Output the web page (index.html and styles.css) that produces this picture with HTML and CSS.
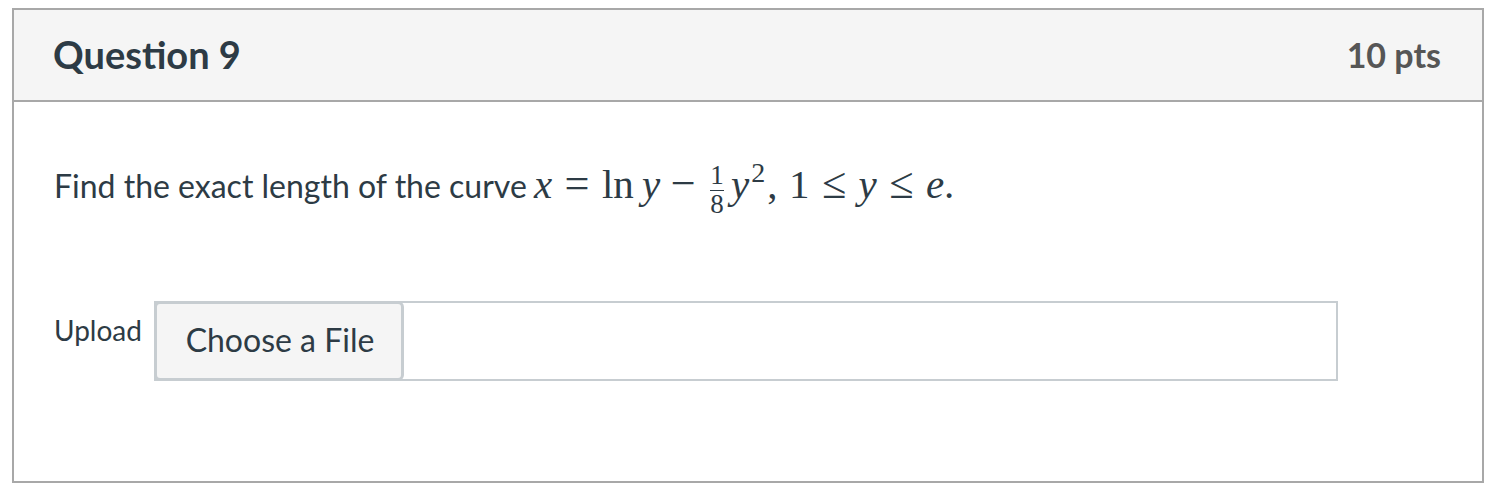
FILE: index.html
```html
<!DOCTYPE html>
<html lang="en">
<head>
<meta charset="utf-8">
<title>Question 9</title>
<link rel="stylesheet" href="styles.css">
</head>
<body>
<div class="card">
  <div class="header">
    <h2 class="title">Question 9</h2>
    <span class="points">10 pts</span>
  </div>
  <div class="content">
    <p class="question">Find the exact length of the curve <span class="math"><i class="mi">x</i><span class="rel">=</span><span class="op">ln</span><i class="mi">y</i><span class="bin">−</span><span class="frac"><span class="num">1</span><span class="bar"></span><span class="den">8</span></span><i class="mi">y</i><span class="sup">2</span><span class="punct">,</span><span class="mn">1</span><span class="rel">≤</span><i class="mi">y</i><span class="rel">≤</span><i class="mi">e</i><span class="mn">.</span></span></p>
    <div class="upload-row">
      <label class="upload-label">Upload</label>
      <div class="file-box">
        <button class="file-btn" type="button">Choose a File</button>
      </div>
    </div>
  </div>
</div>
</body>
</html>
```
FILE: styles.css
```css
html, body {
  margin: 0;
  padding: 0;
  background: #ffffff;
}

body {
  font-family: Lato, "Noto Sans", "Liberation Sans", sans-serif;
  color: #2d3b45;
}

.card {
  box-sizing: border-box;
  width: 1472px;
  height: 475px;
  margin: 8px 0 0 12px;
  border: 2px solid #a8a8a8;
  background: #ffffff;
}

.header {
  box-sizing: border-box;
  height: 92px;
  background: #f5f5f5;
  border-bottom: 2px solid #a8a8a8;
  display: flex;
  align-items: center;
  justify-content: space-between;
  padding: 0 41px 0 39px;
}

.title {
  margin: 0;
  font-size: 38px;
  font-weight: 700;
  line-height: 1.2;
  color: #2d3b45;
}

.points {
  font-size: 34px;
  font-weight: 700;
  line-height: 1.2;
  color: #565656;
}

.content {
  padding: 58px 40px 0 40px;
}

.question {
  margin: 0;
  font-size: 32px;
  line-height: 48px;
}

.math {
  font-family: "Liberation Serif", "DejaVu Serif", serif;
  font-size: 41px;
  color: #2d3b45;
  white-space: nowrap;
  margin-left: -1px;
}

.mi {
  font-style: italic;
}

.rel {
  display: inline-block;
  font-size: 1.08em;
  line-height: 1;
  margin: 0 0.28em;
}

.bin {
  display: inline-block;
  font-size: 1.08em;
  line-height: 1;
  margin: 0 0.3em 0 0.24em;
}

.op {
  margin-right: 0.2em;
}

.punct {
  margin-left: 2px;
  margin-right: 0.28em;
}

.frac {
  display: inline-flex;
  flex-direction: column;
  align-items: center;
  vertical-align: 14px;
  font-size: 27px;
  line-height: 0.92;
  margin: 0 7px 0 1px;
}

.bar {
  display: block;
  width: 14px;
  height: 1px;
  background: #2d3b45;
  margin: 2px 0 1px;
}

.sup {
  font-size: 28px;
  vertical-align: 16px;
  line-height: 0;
  margin-left: 2px;
}

.upload-row {
  display: flex;
  align-items: flex-start;
  margin-top: 84px;
}

.upload-label {
  width: 100px;
  margin-top: 13px;
  font-size: 28px;
  line-height: 1.2;
}

.file-box {
  box-sizing: border-box;
  width: 1184px;
  height: 80px;
  border: 2px solid #c7cdd1;
  display: flex;
}

.file-btn {
  box-sizing: border-box;
  width: 250px;
  height: 80px;
  margin: -2px 0 -2px -2px;
  border: 3px solid #c7cdd1;
  border-radius: 6px;
  background: #f5f5f5;
  color: #2d3b45;
  font-family: Lato, "Noto Sans", "Liberation Sans", sans-serif;
  font-size: 32px;
  line-height: 1.2;
  padding: 0 0 0 2px;
}
```
